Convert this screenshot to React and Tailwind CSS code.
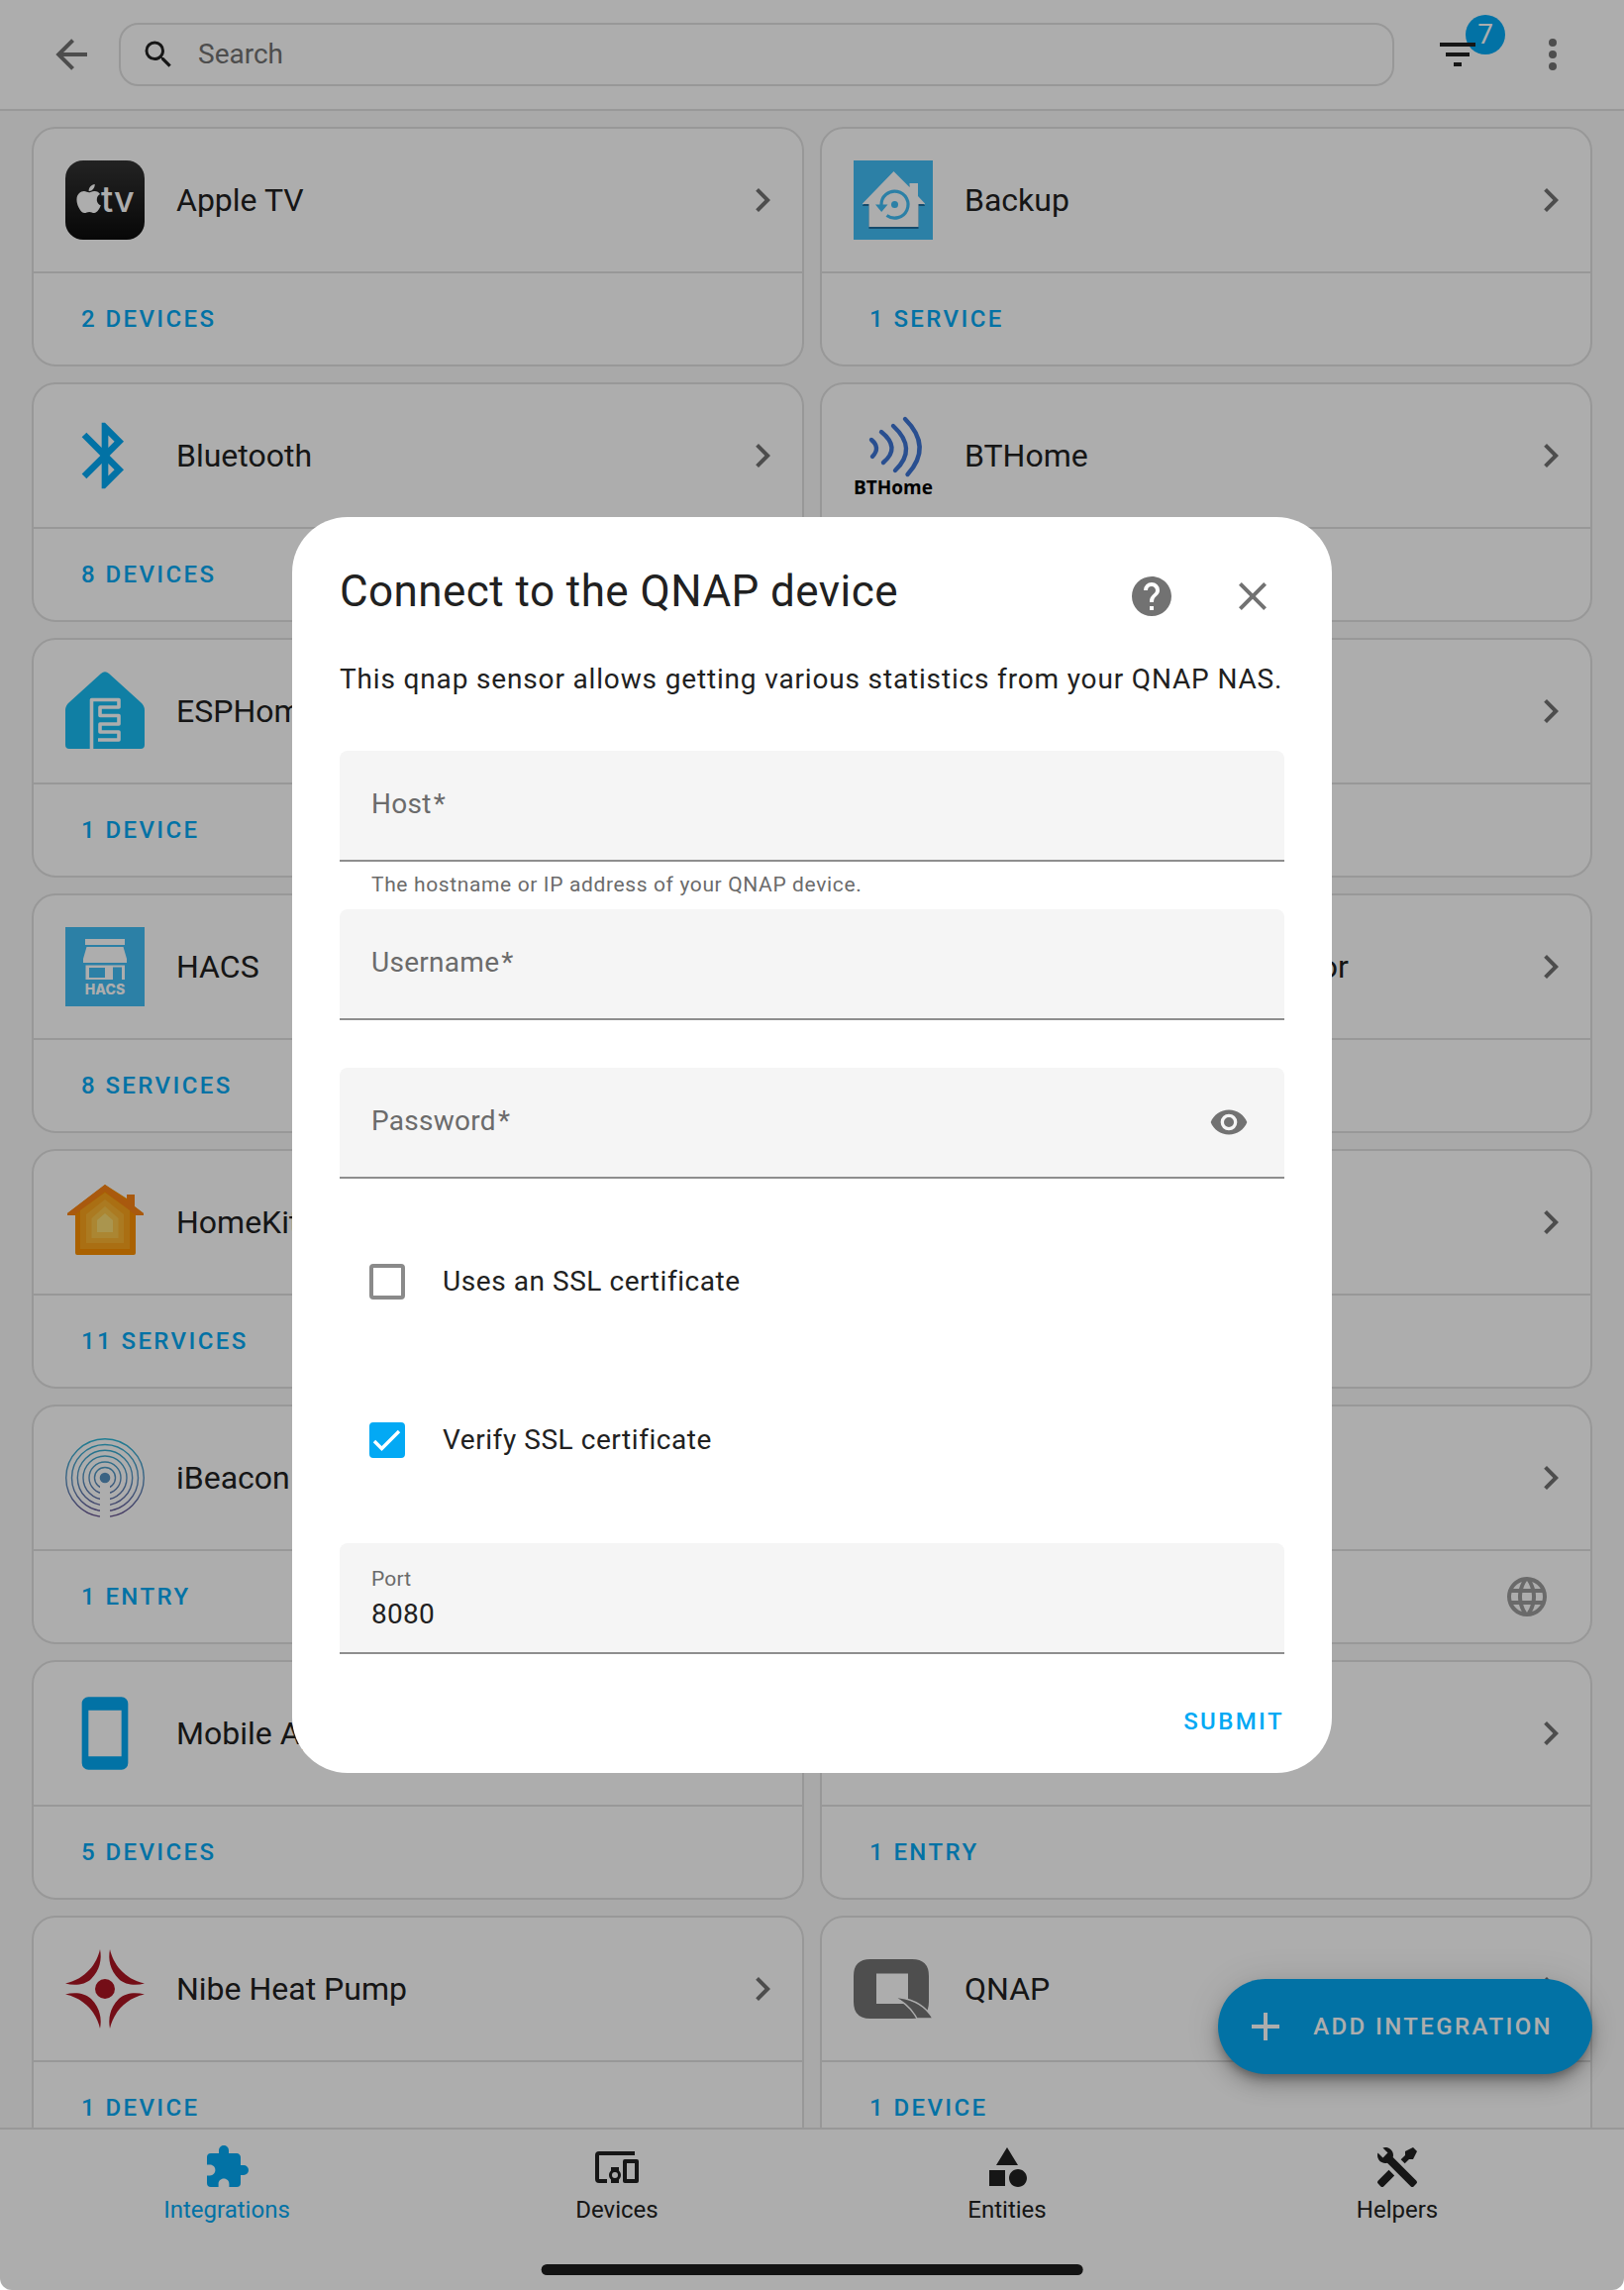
import React, { useState } from "react";

const icons = {
  arrowLeft:
    "M20,11V13H8L13.5,18.5L12.08,19.92L4.16,12L12.08,4.08L13.5,5.5L8,11H20Z",
  magnify:
    "M9.5,3A6.5,6.5 0 0,1 16,9.5C16,11.11 15.41,12.59 14.44,13.73L14.71,14H15.5L20.5,19L19,20.5L14,15.5V14.71L13.73,14.44C12.59,15.41 11.11,16 9.5,16A6.5,6.5 0 0,1 3,9.5A6.5,6.5 0 0,1 9.5,3M9.5,5C7,5 5,7 5,9.5C5,12 7,14 9.5,14C12,14 14,12 14,9.5C14,7 12,5 9.5,5Z",
  filter: "M6,13H18V11H6M3,6V8H21V6M10,18H14V16H10V18Z",
  dots: "M12,16A2,2 0 0,1 14,18A2,2 0 0,1 12,20A2,2 0 0,1 10,18A2,2 0 0,1 12,16M12,10A2,2 0 0,1 14,12A2,2 0 0,1 12,14A2,2 0 0,1 10,12A2,2 0 0,1 12,10M12,4A2,2 0 0,1 14,6A2,2 0 0,1 12,8A2,2 0 0,1 10,6A2,2 0 0,1 12,4Z",
  chevronRight:
    "M8.59,16.58L13.17,12L8.59,7.41L10,6L16,12L10,18L8.59,16.58Z",
  bluetooth:
    "M14.88,16.29L13,18.17V14.41M13,5.83L14.88,7.71L13,9.58M17.71,7.71L12,2H11V9.58L6.41,5L5,6.41L10.59,12L5,17.58L6.41,19L11,14.41V22H12L17.71,16.29L13.41,12L17.71,7.71Z",
  cellphone:
    "M17,19H7V5H17M17,1H7C5.89,1 5,1.89 5,3V21A2,2 0 0,0 7,23H17A2,2 0 0,0 19,21V3C19,1.89 18.1,1 17,1Z",
  web: "M16.36,14C16.44,13.34 16.5,12.68 16.5,12C16.5,11.32 16.44,10.66 16.36,10H19.74C19.9,10.64 20,11.31 20,12C20,12.69 19.9,13.36 19.74,14M14.59,19.56C15.19,18.45 15.65,17.25 15.97,16H18.92C17.96,17.65 16.43,18.93 14.59,19.56M14.34,14H9.66C9.56,13.34 9.5,12.68 9.5,12C9.5,11.32 9.56,10.65 9.66,10H14.34C14.43,10.65 14.5,11.32 14.5,12C14.5,12.68 14.43,13.34 14.34,14M12,19.96C11.17,18.76 10.5,17.43 10.09,16H13.91C13.5,17.43 12.83,18.76 12,19.96M8,8H5.08C6.03,6.34 7.57,5.06 9.4,4.44C8.8,5.55 8.35,6.75 8,8M5.08,16H8C8.35,17.25 8.8,18.45 9.4,19.56C7.57,18.93 6.03,17.65 5.08,16M4.26,14C4.1,13.36 4,12.69 4,12C4,11.31 4.1,10.64 4.26,10H7.64C7.56,10.66 7.5,11.32 7.5,12C7.5,12.68 7.56,13.34 7.64,14M12,4.03C12.83,5.23 13.5,6.57 13.91,8H10.09C10.5,6.57 11.17,5.23 12,4.03M18.92,8H15.97C15.65,6.75 15.19,5.55 14.59,4.44C16.43,5.07 17.96,6.34 18.92,8M12,2C6.47,2 2,6.5 2,12A10,10 0 0,0 12,22A10,10 0 0,0 22,12A10,10 0 0,0 12,2Z",
  help: "M15.07,11.25L14.17,12.17C13.45,12.89 13,13.5 13,15H11V14.5C11,13.39 11.45,12.39 12.17,11.67L13.41,10.41C13.78,10.05 14,9.55 14,9C14,7.89 13.1,7 12,7A2,2 0 0,0 10,9H8A4,4 0 0,1 12,5A4,4 0 0,1 16,9C16,9.88 15.64,10.67 15.07,11.25M13,19H11V17H13M12,2A10,10 0 0,0 2,12A10,10 0 0,0 12,22A10,10 0 0,0 22,12C22,6.47 17.5,2 12,2Z",
  close:
    "M19,6.41L17.59,5L12,10.59L6.41,5L5,6.41L10.59,12L5,17.59L6.41,19L12,13.41L17.59,19L19,17.59L13.41,12L19,6.41Z",
  eye: "M12,9A3,3 0 0,0 9,12A3,3 0 0,0 12,15A3,3 0 0,0 15,12A3,3 0 0,0 12,9M12,17A5,5 0 0,1 7,12A5,5 0 0,1 12,7A5,5 0 0,1 17,12A5,5 0 0,1 12,17M12,4.5C7,4.5 2.73,7.61 1,12C2.73,16.39 7,19.5 12,19.5C17,19.5 21.27,16.39 23,12C21.27,7.61 17,4.5 12,4.5Z",
  plus: "M19,13H13V19H11V13H5V11H11V5H13V11H19V13Z",
  puzzle:
    "M20.5,11H19V7C19,5.89 18.1,5 17,5H13V3.5A2.5,2.5 0 0,0 10.5,1A2.5,2.5 0 0,0 8,3.5V5H4A2,2 0 0,0 2,7V10.8H3.5C5,10.8 6.2,12 6.2,13.5C6.2,15 5,16.2 3.5,16.2H2V20A2,2 0 0,0 4,22H7.8V20.5C7.8,19 9,17.8 10.5,17.8C12,17.8 13.2,19 13.2,20.5V22H17A2,2 0 0,0 19,20V16H20.5A2.5,2.5 0 0,0 23,13.5A2.5,2.5 0 0,0 20.5,11Z",
  devices:
    "M3,6H21V4H3A2,2 0 0,0 1,6V18A2,2 0 0,0 3,20H7V18H3V6M13,12H9V13.78C8.39,14.33 8,15.11 8,16C8,16.89 8.39,17.67 9,18.22V20H13V18.22C13.61,17.67 14,16.88 14,16C14,15.12 13.61,14.33 13,13.78V12M11,17.5A1.5,1.5 0 0,1 9.5,16A1.5,1.5 0 0,1 11,14.5A1.5,1.5 0 0,1 12.5,16A1.5,1.5 0 0,1 11,17.5M22,8H16A1,1 0 0,0 15,9V19A1,1 0 0,0 16,20H22A1,1 0 0,0 23,19V9A1,1 0 0,0 22,8M21,18H17V10H21V18Z",
  shape:
    "M11,13.5V21.5H3V13.5H11M12,2L17.5,11H6.5L12,2M17.5,13C20,13 22,15 22,17.5C22,20 20,22 17.5,22C15,22 13,20 13,17.5C13,15 15,13 17.5,13Z",
  tools:
    "M21.71 20.29L20.29 21.71A1 1 0 0 1 18.88 21.71L7 9.85A3.81 3.81 0 0 1 6 10A4 4 0 0 1 2.22 4.7L4.76 7.24L5.29 6.71L6.71 5.29L7.24 4.76L4.7 2.22A4 4 0 0 1 10 6A3.81 3.81 0 0 1 9.85 7L21.71 18.88A1 1 0 0 1 21.71 20.29M2.29 18.88A1 1 0 0 0 2.29 20.29L3.71 21.71A1 1 0 0 0 5.12 21.71L10.59 16.25L7.76 13.42M20 2L16 4V6L13.83 8.17L15.83 10.17L18 8H20L22 4Z",
};

function Icon({ name, className = "size-12" }) {
  return (
    <svg
      viewBox="0 0 24 24"
      fill="currentColor"
      aria-hidden="true"
      className={`shrink-0 ${className}`}
    >
      <path d={icons[name]} />
    </svg>
  );
}

function IconButton({ icon, label, className = "", children }) {
  return (
    <button
      type="button"
      aria-label={label}
      className={`relative flex size-24 shrink-0 items-center justify-center rounded-full ${className}`}
    >
      {children}
      <Icon name={icon} className="relative size-12" />
    </button>
  );
}

function Logo({ children }) {
  return (
    <svg
      viewBox="0 0 80 80"
      aria-hidden="true"
      className="size-20 shrink-0 overflow-visible"
    >
      {children}
    </svg>
  );
}

function AppleTvLogo() {
  return (
    <Logo>
      <defs>
        <linearGradient id="atv" x1="0" y1="0" x2="0" y2="1">
          <stop offset="0" stopColor="#343434" />
          <stop offset="1" stopColor="#0c0c0c" />
        </linearGradient>
      </defs>
      <rect width="80" height="80" rx="18" fill="url(#atv)" />
      <path
        transform="translate(11.2 22) scale(0.0647)"
        fill="#fff"
        d="M318.7 268.7c-.2-36.7 16.4-64.4 50-84.8-18.8-26.9-47.2-41.7-84.7-44.6-35.5-2.8-74.3 20.7-88.5 20.7-15 0-49.4-19.7-76.4-19.7C63.3 141.2 4 184.8 4 273.5q0 39.3 14.4 81.2c12.8 36.7 59 126.7 107.2 125.2 25.2-.6 43-17.9 75.8-17.9 31.8 0 48.3 17.9 76.4 17.9 48.6-.7 90.4-82.5 102.6-119.3-65.2-30.7-61.7-90-61.7-91.9zm-56.6-164.2c27.3-32.4 24.8-61.9 24-72.5-24.1 1.4-52 16.4-67.9 34.9-17.5 19.8-27.8 44.3-25.6 71.9 26.1 2 49.9-11.4 69.5-34.3z"
      />
      <text
        x="36"
        y="52"
        fill="#fff"
        className="font-['Inter',sans-serif] text-[36px] font-medium"
      >
        tv
      </text>
    </Logo>
  );
}

function BackupLogo() {
  const house =
    "M40.5 11L56.5 27V23H65V36L72 43.5V44H65.5V67H15.5V44H9V43.5Z";
  return (
    <Logo>
      <rect width="80" height="80" fill="#41bdf5" />
      <path d={house} transform="translate(0 2)" fill="#1f6fa0" />
      <path d={house} fill="#fff" />
      <path
        d="M28 45A13.5 13.5 0 1 1 33.5 55.5"
        fill="none"
        stroke="#41bdf5"
        strokeWidth="3.2"
      />
      <path d="M22 44.5H34.5L28.2 52Z" fill="#41bdf5" />
      <circle cx="41.5" cy="44.5" r="3.5" fill="#41bdf5" />
    </Logo>
  );
}

function BluetoothLogo() {
  return <Icon name="bluetooth" className="size-20 text-[#03a9f4]" />;
}

function BTHomeLogo() {
  return (
    <Logo>
      <g fill="none" stroke="#3d75d4" strokeWidth="4.4" strokeLinecap="round">
        <path d="M18 24Q27.5 32 19 41" />
        <path d="M28 16Q48 32 30 47" />
        <path d="M40 10Q65 33 42 55" />
        <path d="M52 3Q80 31 54.5 59" />
      </g>
      <text
        x="40"
        y="79"
        textAnchor="middle"
        className="font-['Open_Sans',sans-serif] text-[19px] font-bold"
      >
        BTHome
      </text>
    </Logo>
  );
}

function EspHomeLogo() {
  return (
    <Logo>
      <path
        d="M36 2Q40 -1.5 44 2L76 31Q80 34.5 80 39V74Q80 78 76 78H4Q0 78 0 74V39Q0 34.5 4 31Z"
        fill="#18bcf2"
      />
      <path
        d="M26.5 78V28.5H54V36H35V44.5H54V53H35V61H54V69H33"
        fill="none"
        stroke="#fff"
        strokeWidth="3.6"
        strokeLinejoin="round"
      />
    </Logo>
  );
}

function HacsLogo() {
  return (
    <Logo>
      <rect width="80" height="80" fill="#41bdf5" />
      <g fill="#fff">
        <rect x="20" y="12" width="40" height="6" />
        <path d="M21.5 20H58.5L62 32V36H18V32Z" />
        <path
          fillRule="evenodd"
          d="M20.5 38.5H60V53H57V40.5H48V53H20.5ZM24 41V51H40V41Z"
        />
        <text
          x="40"
          y="68"
          textAnchor="middle"
          className="font-['Inter',sans-serif] text-[14px] font-extrabold"
        >
          HACS
        </text>
      </g>
    </Logo>
  );
}

function HomeKitLogo() {
  return (
    <Logo>
      <path
        d="M40 2L62 16V12H70V24L79 31V33H71V71Q71 73 69 73H12Q10 73 10 71V33H2V31Z"
        fill="#fb9000"
      />
      <path d="M40 2L79 31V33H71L40 9L9 33H2V31Z" fill="#f98416" />
      <path d="M62 12H70V28L62 22Z" fill="#f98416" />
      <path d="M40 10L65 28V67H15V28Z" fill="#fba41c" />
      <path d="M40 17L59 32V61H21V32Z" fill="#fcb432" />
      <path d="M40 24L53.5 36V56H26.5V36Z" fill="#fcc64a" />
      <path d="M40 31L48 38V50H32V38Z" fill="#fbdc74" />
    </Logo>
  );
}

function IBeaconLogo() {
  return (
    <Logo>
      <defs>
        <linearGradient
          id="beacon"
          gradientUnits="userSpaceOnUse"
          x1="0"
          y1="0"
          x2="0"
          y2="80"
        >
          <stop offset="0" stopColor="#2cb8d8" />
          <stop offset="0.5" stopColor="#5893c2" />
          <stop offset="1" stopColor="#6a5490" />
        </linearGradient>
        <clipPath id="beam">
          <path d="M0 0H80V80H45V40H35V80H0Z" />
        </clipPath>
      </defs>
      <g
        fill="none"
        stroke="url(#beacon)"
        strokeWidth="1.4"
        clipPath="url(#beam)"
      >
        {[10.5, 16, 22, 27.7, 33.5, 39.3].map((r) => (
          <circle key={r} cx="40" cy="40" r={r} />
        ))}
      </g>
      <circle cx="40" cy="40" r="5.3" fill="#5893c2" />
    </Logo>
  );
}

function MobileLogo() {
  return <Icon name="cellphone" className="size-20 text-[#03a9f4]" />;
}

function NibeLogo() {
  const petal = "M35 0C32 14 21 30 0 34.5C9 37 20 36 26 30C35 21 37 10 35 0Z";
  return (
    <Logo>
      <g fill="#ac1523">
        <circle cx="40" cy="40" r="10" />
        <path d={petal} />
        <path d={petal} transform="matrix(-1 0 0 1 80 0)" />
        <path d={petal} transform="matrix(1 0 0 -1 0 80)" />
        <path d={petal} transform="matrix(-1 0 0 -1 80 80)" />
      </g>
    </Logo>
  );
}

function QnapLogo() {
  return (
    <Logo>
      <g fill="#747474">
        <path
          fillRule="evenodd"
          d="M17 10H59Q76 10 76 27V53Q76 70 59 70H17Q0 70 0 53V27Q0 10 17 10ZM23 24.5V55H55V24.5Z"
        />
        <path
          d="M40 48Q69 50 80 70H64Q56 55 40 48Z"
          stroke="#fff"
          strokeWidth="1.4"
        />
      </g>
    </Logo>
  );
}

function GenericLogo() {
  return <Icon name="puzzle" className="size-20 text-[#03a9f4]" />;
}

const integrations = [
  { name: "Apple TV", count: "2 devices", Logo: AppleTvLogo },
  { name: "Backup", count: "1 service", Logo: BackupLogo },
  { name: "Bluetooth", count: "8 devices", Logo: BluetoothLogo },
  { name: "BTHome", count: "1 device", Logo: BTHomeLogo },
  { name: "ESPHome", count: "1 device", Logo: EspHomeLogo },
  { name: "go2rtc", count: "1 entry", Logo: GenericLogo },
  { name: "HACS", count: "8 services", Logo: HacsLogo },
  { name: "Home Assistant Supervisor", count: "1 service", Logo: GenericLogo },
  { name: "HomeKit Bridge", count: "11 services", Logo: HomeKitLogo },
  { name: "HomeKit Device", count: "1 device", Logo: HomeKitLogo },
  { name: "iBeacon Tracker", count: "1 entry", Logo: IBeaconLogo },
  { name: "Met.no", count: "1 service", Logo: GenericLogo, cloud: true },
  { name: "Mobile App", count: "5 devices", Logo: MobileLogo },
  { name: "Moon", count: "1 entry", Logo: GenericLogo },
  { name: "Nibe Heat Pump", count: "1 device", Logo: NibeLogo },
  { name: "QNAP", count: "1 device", Logo: QnapLogo },
];

const tabs = [
  { name: "Integrations", icon: "puzzle", active: true },
  { name: "Devices", icon: "devices" },
  { name: "Entities", icon: "shape" },
  { name: "Helpers", icon: "tools" },
];

function IntegrationCard({ name, count, Logo: Brand, cloud }) {
  return (
    <article className="rounded-3xl border-2 border-[#e0e0e0] bg-white">
      <a href="#" className="flex h-36 items-center gap-8 pr-4 pl-8">
        <Brand />
        <h2 className="flex-1 truncate text-[32px]">{name}</h2>
        <Icon name="chevronRight" className="size-12 text-[#727272]" />
      </a>
      <div className="flex h-[94px] items-center justify-between border-t-2 border-[#e0e0e0] pr-10 pl-12">
        <a
          href="#"
          className="text-2xl font-medium tracking-widest text-[#03a9f4] uppercase"
        >
          {count}
        </a>
        {cloud && <Icon name="web" className="size-12 text-[#9c9c9c]" />}
      </div>
    </article>
  );
}

function Header() {
  return (
    <header className="flex h-28 shrink-0 items-center border-b-2 border-[#e0e0e0] bg-white px-6">
      <IconButton icon="arrowLeft" label="Back" className="text-[#727272]" />
      <div className="mr-4 flex h-16 flex-1 items-center gap-[22px] rounded-[20px] border-2 border-[#e0e0e0] px-5">
        <Icon name="magnify" className="size-9" />
        <input
          type="text"
          aria-label="Search"
          placeholder="Search"
          className="w-full text-[28px] outline-none placeholder:text-[#727272]"
        />
      </div>
      <IconButton icon="filter" label="Filter">
        <span className="absolute top-2 right-0 flex size-10 items-center justify-center rounded-full bg-[#03a9f4] text-[28px] text-white">
          7
        </span>
      </IconButton>
      <IconButton icon="dots" label="Menu" className="text-[#727272]" />
    </header>
  );
}

function TextField({
  id,
  label,
  type = "text",
  value,
  required,
  helper,
  children,
}) {
  return (
    <div>
      <div className="relative h-28 rounded-t-lg border-b-2 border-[#8e8e8e] bg-[#f5f5f5]">
        <input
          id={id}
          type={type}
          defaultValue={value}
          required={required}
          placeholder=" "
          className="peer size-full px-8 pt-8 text-[28px] tracking-[0.01em] outline-none"
        />
        <label
          htmlFor={id}
          className="pointer-events-none absolute top-6 left-8 text-[21px] leading-6 tracking-[0.01em] text-[#6b6b6b] peer-placeholder-shown:top-[38px] peer-placeholder-shown:text-[28px] peer-placeholder-shown:leading-8"
        >
          {label}
          {required && <span className="ml-0.5">*</span>}
        </label>
        {children}
      </div>
      <p className="flex h-12 items-center px-8 text-[21px] tracking-[0.03em] text-[#6b6b6b]">
        {helper}
      </p>
    </div>
  );
}

function CheckField({ id, label, checked, onChange }) {
  return (
    <div className="mb-12 flex h-28 items-center gap-[38px] pl-[30px]">
      <span className="relative flex size-9">
        <input
          id={id}
          type="checkbox"
          checked={checked}
          onChange={(e) => onChange(e.target.checked)}
          className="size-9 appearance-none rounded border-4 border-[#8a8a8a] checked:border-[#03a9f4] checked:bg-[#03a9f4]"
        />
        {checked && (
          <svg
            viewBox="0 0 36 36"
            fill="none"
            stroke="#fff"
            strokeWidth="3.4"
            aria-hidden="true"
            className="pointer-events-none absolute inset-0"
          >
            <path d="M5 19L12.5 26.5L30 9" />
          </svg>
        )}
      </span>
      <label htmlFor={id} className="text-[28px] tracking-[0.02em]">
        {label}
      </label>
    </div>
  );
}

function ConnectDialog() {
  const [usesSsl, setUsesSsl] = useState(false);
  const [verifySsl, setVerifySsl] = useState(true);

  return (
    <div
      role="dialog"
      aria-labelledby="dialog-title"
      className="w-[1050px] max-w-full rounded-[56px] bg-white pt-8 pb-4"
    >
      <div className="flex gap-[6px] pr-8 pl-12">
        <h1
          id="dialog-title"
          className="flex-1 text-[44px] leading-[86px] tracking-[0.01em]"
        >
          Connect to the QNAP device
        </h1>
        <IconButton icon="help" label="Help" className="text-[#727272]" />
        <IconButton icon="close" label="Close" className="text-[#727272]" />
      </div>
      <form className="px-12" onSubmit={(e) => e.preventDefault()} noValidate>
        <p className="mt-4 mb-[52px] text-[28px] leading-10 tracking-[0.03em]">
          This qnap sensor allows getting various statistics from your QNAP NAS.
        </p>
        <TextField
          id="host"
          label="Host"
          required
          helper="The hostname or IP address of your QNAP device."
        />
        <TextField id="username" label="Username" required />
        <TextField id="password" label="Password" type="password" required>
          <button
            type="button"
            aria-label="Show password"
            className="absolute inset-y-0 right-9 text-[#727272]"
          >
            <Icon name="eye" className="size-10" />
          </button>
        </TextField>
        <CheckField
          id="ssl"
          label="Uses an SSL certificate"
          checked={usesSsl}
          onChange={setUsesSsl}
        />
        <CheckField
          id="verify"
          label="Verify SSL certificate"
          checked={verifySsl}
          onChange={setVerifySsl}
        />
        <div className="-mb-4">
          <TextField id="port" label="Port" value="8080" />
        </div>
        <div className="flex justify-end">
          <button
            type="submit"
            className="h-[72px] text-2xl font-medium tracking-widest text-[#03a9f4] uppercase"
          >
            Submit
          </button>
        </div>
      </form>
    </div>
  );
}

function App() {
  return (
    <div className="relative flex h-screen flex-col overflow-hidden rounded-b-xl bg-[#fafafa] font-['Roboto',sans-serif] text-[#212121]">
      <Header />
      <main className="relative min-h-0 flex-1 overflow-hidden">
        <div className="grid grid-cols-2 gap-4 px-8 py-4">
          {integrations.map((item) => (
            <IntegrationCard key={item.name} {...item} />
          ))}
        </div>
        <button
          type="button"
          className="absolute right-8 bottom-[54px] flex h-24 items-center gap-6 rounded-full bg-[#03a9f4] pr-10 pl-6 text-2xl font-medium tracking-widest text-white uppercase shadow-[0_6px_10px_-2px_rgba(0,0,0,0.3),0_12px_20px_rgba(0,0,0,0.18),0_2px_36px_rgba(0,0,0,0.12)]"
        >
          <Icon name="plus" className="size-12" />
          Add integration
        </button>
      </main>
      <nav className="flex h-[164px] shrink-0 items-start border-t-2 border-[#e0e0e0] bg-white px-8">
        {tabs.map(({ name, icon, active }) => (
          <a
            key={name}
            href="#"
            className={`flex flex-1 flex-col items-center gap-[3px] pt-[14px] text-2xl ${active ? "text-[#03a9f4]" : ""}`}
          >
            <Icon name={icon} />
            {name}
          </a>
        ))}
      </nav>
      <div className="absolute inset-0 flex items-center justify-center bg-black/32">
        <ConnectDialog />
      </div>
      {/* system home indicator */}
      <div className="absolute bottom-[15px] left-1/2 h-[11px] w-1/3 -translate-x-1/2 rounded-full bg-[#141414]" />
    </div>
  );
}

export default App;
